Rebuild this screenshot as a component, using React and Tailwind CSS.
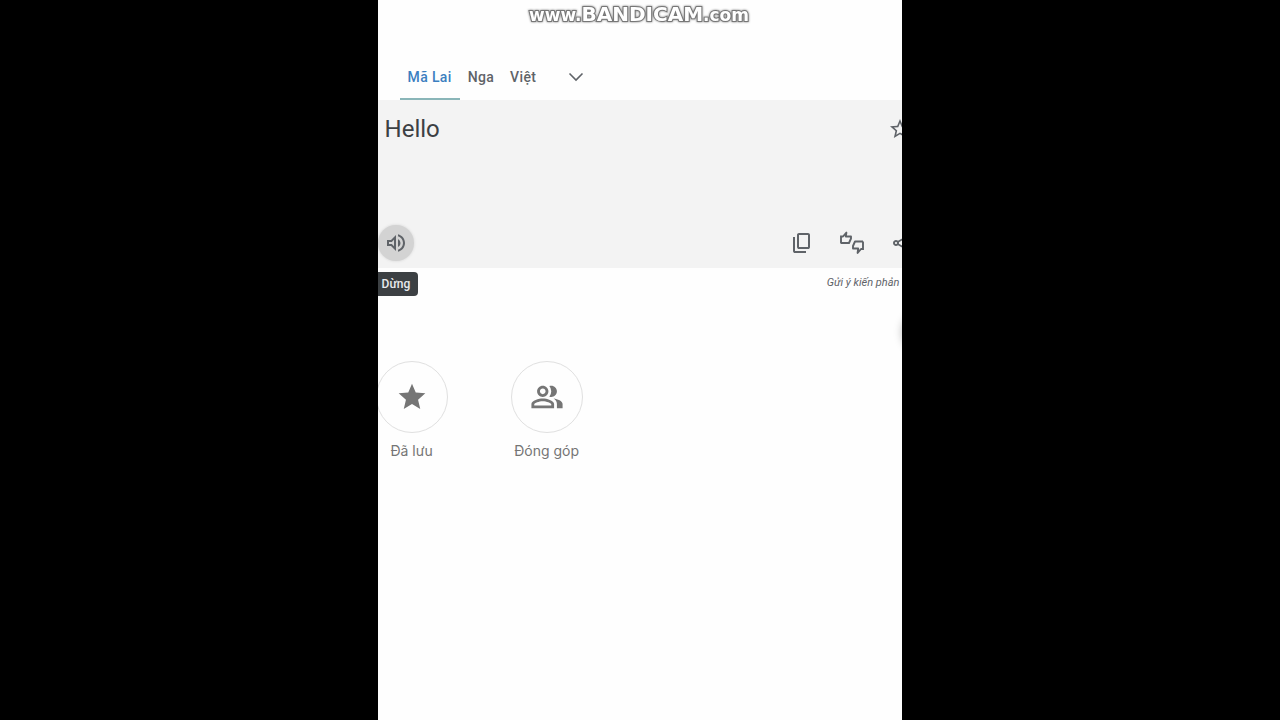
import React from 'react';
import {
  MdOutlineVolumeUp,
  MdStarOutline,
  MdStar,
  MdOutlinePeopleAlt,
  MdOutlineShare,
} from 'react-icons/md';

const languages = [
  { name: 'Mã Lai', active: true },
  { name: 'Nga', active: false },
  { name: 'Việt', active: false },
];

const shortcuts = [
  { label: 'Đã lưu', icon: <MdStar size={32} /> },
  { label: 'Đóng góp', icon: <MdOutlinePeopleAlt size={34} /> },
];

function CopyIcon() {
  return (
    <svg className="w-6 h-6" viewBox="0 -960 960 960" fill="currentColor" aria-hidden="true">
      <path d="M360-240q-33 0-56.5-23.5T280-320v-480q0-33 23.5-56.5T360-880h360q33 0 56.5 23.5T800-800v480q0 33-23.5 56.5T720-240H360Zm0-80h360v-480H360v480ZM200-80q-33 0-56.5-23.5T120-160v-560h80v560h440v80H200Z" />
    </svg>
  );
}

function RateIcon() {
  return (
    <svg
      className="w-7 h-6"
      viewBox="0 0 28 24"
      fill="none"
      stroke="currentColor"
      strokeWidth="1.9"
      strokeLinejoin="round"
      aria-hidden="true"
    >
      <path d="M3 4.5V12.5M3 5.5H5L8.4 1.6L7.8 5.5H13V7.5L11 12H3" />
      <path d="M25 19V10.5M25 10.5H17L15 15V17.5H20.2L19.6 22L23 18H25" />
    </svg>
  );
}

function Watermark() {
  return (
    <svg className="block w-[236px] h-8" viewBox="0 0 236 32" role="img" aria-label="www.BANDICAM.com">
      <text
        className="font-['DejaVu_Sans',sans-serif] font-bold [filter:drop-shadow(0_0_1px_#777)]"
        x="117"
        y="21"
        textAnchor="middle"
        fill="#fff"
        stroke="#777"
        strokeWidth="2"
        paintOrder="stroke"
        fontSize="17"
      >
        www.<tspan fontSize="20">BANDICAM</tspan>.com
      </text>
    </svg>
  );
}

function LanguageTabs() {
  return (
    <nav className="flex h-12 pl-[22px] text-sm font-medium tracking-wide text-[#5f6368]">
      {languages.map(({ name, active }) => (
        <button
          key={name}
          className={
            active
              ? 'px-2 pt-1 border-b-2 border-[#8ab5b8] text-[#3b7fc0]'
              : 'px-2 pt-1 border-b-2 border-transparent'
          }
        >
          {name}
        </button>
      ))}
      <button className="ml-4 px-2" aria-label="Thêm ngôn ngữ">
        <svg className="w-4 h-6" viewBox="0 0 16 24" fill="none" stroke="currentColor" strokeWidth="1.6" aria-hidden="true">
          <path d="M1.5 9.5L8 16L14.5 9.5" />
        </svg>
      </button>
    </nav>
  );
}

function Translation() {
  return (
    <section className="flex flex-col justify-between h-[168px] bg-[#f3f3f3] text-[#5f6368]">
      <div className="flex justify-between pt-[13px] pl-[7px]">
        <p className="text-2xl leading-8 text-[#3c4043]">Hello</p>
        <button className="-mr-[10px] mt-1 h-6" aria-label="Lưu bản dịch">
          <MdStarOutline size={24} />
        </button>
      </div>
      <div className="flex items-center justify-between pb-[7px]">
        <button
          className="flex items-center justify-center w-9 h-9 rounded-full bg-[#d3d3d3] shadow-[0_0_3px_#d3d3d3]"
          aria-label="Dừng"
        >
          <MdOutlineVolumeUp size={24} />
        </button>
        <div className="flex items-center gap-6 -mr-3">
          <button aria-label="Sao chép"><CopyIcon /></button>
          <button aria-label="Đánh giá"><RateIcon /></button>
          <button aria-label="Chia sẻ"><MdOutlineShare size={24} /></button>
        </div>
      </div>
    </section>
  );
}

export default function App() {
  return (
    <div className="flex justify-center min-h-screen bg-black font-[Roboto,sans-serif]">
      <main className="relative w-[41%] overflow-hidden bg-[#fefefe]">
        <header className="flex justify-center h-[52px]">
          <Watermark />
        </header>
        <LanguageTabs />
        <Translation />
        <div className="flex items-start justify-between h-[93px] pt-1">
          <span role="tooltip" className="pl-1 pr-2 rounded-r bg-[#3c4043] text-xs leading-6 font-medium text-[#e8eaed]">
            Dừng
          </span>
          <a href="#feedback" className="pr-[3px] text-[11px] leading-[22px] italic text-[#5f6368]">
            Gửi ý kiến phản
          </a>
        </div>
        <div className="flex gap-[63px] -ml-[2px]">
          {shortcuts.map(({ label, icon }) => (
            <button key={label} className="flex flex-col items-center gap-2 w-[72px] text-sm text-[#757575]">
              <span className="flex items-center justify-center w-[72px] h-[72px] border border-[#e0e0e0] rounded-full">
                {icon}
              </span>
              <span className="whitespace-nowrap font-[Inter,sans-serif]">{label}</span>
            </button>
          ))}
        </div>
        {/* side panel handle, only its shadow reaches into view */}
        <button
          className="absolute left-full top-[312px] w-10 h-10 rounded-full shadow-[0_0_8px_#bbb]"
          aria-label="Mở bảng bên"
        />
      </main>
    </div>
  );
}
